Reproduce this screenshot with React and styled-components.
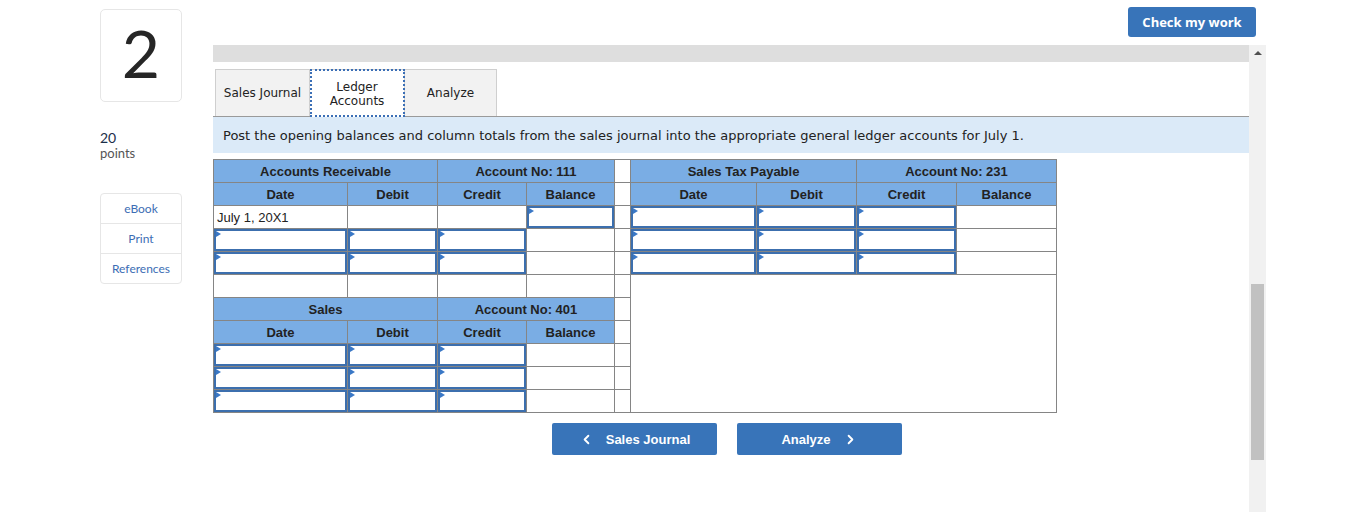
import React from 'react';
import styled, { css, createGlobalStyle } from 'styled-components';
import { ChevronLeft, ChevronRight } from 'lucide-react';

const GlobalStyle = createGlobalStyle`
  body {
    margin: 0;
    background: #fff;
    font-family: "Liberation Sans", Arial, sans-serif;
    overflow: hidden;
  }
`;

const Page = styled.div`
  display: flex;
  padding-left: 100px;
  height: 512px;
`;

const Sidebar = styled.div`
  width: 82px;
  padding-top: 9px;
  display: flex;
  flex-direction: column;
`;

const QuestionBox = styled.div`
  height: 93px;
  box-sizing: border-box;
  padding-bottom: 6px;
  border: 1px solid #e6e6e6;
  border-radius: 5px;
  display: flex;
  align-items: center;
  justify-content: center;
  font-family: Lato, "Open Sans", sans-serif;
  font-weight: 400;
  font-size: 66px;
  color: #262626;
`;

const Points = styled.div`
  margin-top: 28px;
  font-family: Lato, "Open Sans", sans-serif;
  font-size: 14px;
  line-height: 16px;
  color: #1c2f4a;

  span {
    display: block;
    font-size: 13px;
    line-height: 14px;
    color: #555;
  }
`;

const LinkBox = styled.div`
  margin-top: 33px;
  border: 1px solid #e6e6e6;
  border-radius: 4px;
  display: flex;
  flex-direction: column;
`;

const LinkItem = styled.div`
  height: 29px;
  display: flex;
  align-items: center;
  justify-content: center;
  font-family: Lato, "Open Sans", sans-serif;
  font-size: 12px;
  color: #3c6db4;
  border-top: 1px solid #e6e6e6;

  ${p => p.first && css`
    border-top: none;
  `}
`;

const Main = styled.div`
  margin-left: 31px;
  width: 1053px;
  display: flex;
  flex-direction: column;
`;

const TopBar = styled.div`
  height: 45px;
  box-sizing: border-box;
  padding: 7px 10px 0 0;
  display: flex;
  justify-content: flex-end;
  align-items: flex-start;
`;

const CheckButton = styled.button`
  width: 128px;
  height: 30px;
  border: none;
  border-radius: 3px;
  background: #3874b9;
  color: #fff;
  font-family: "Open Sans", Lato, sans-serif;
  font-weight: 700;
  font-size: 13px;
  padding: 0;
`;

const Frame = styled.div`
  display: flex;
  height: 467px;
`;

const Content = styled.div`
  width: 1036px;
  display: flex;
  flex-direction: column;
`;

const GrayBar = styled.div`
  height: 17px;
  background: #dedede;
`;

const TabRow = styled.div`
  margin-top: 7px;
  padding-left: 2px;
  display: flex;
  border-bottom: 1px solid #9a9a9a;
`;

const Tab = styled.div`
  width: ${p => p.w}px;
  height: 47px;
  box-sizing: border-box;
  border: 1px solid #cfcfcf;
  border-bottom: none;
  border-left: none;
  background: #f2f2f2;
  display: flex;
  align-items: center;
  justify-content: center;
  text-align: center;
  font-family: "DejaVu Sans", sans-serif;
  font-size: 12px;
  line-height: 14px;
  color: #222;

  ${p => p.firstTab && css`
    border-left: 1px solid #cfcfcf;
  `}

  ${p => p.active && css`
    position: relative;
    background: #fff;
    height: 48px;
    margin-bottom: -1px;
    outline: 2px dotted #3b6fb6;
    outline-offset: -2px;
  `}
`;

const Prompt = styled.div`
  height: 36px;
  padding-left: 10px;
  background: #dbeaf8;
  display: flex;
  align-items: center;
  font-family: "DejaVu Sans", sans-serif;
  font-size: 13px;
  color: #222;
`;

const Table = styled.table`
  margin-top: 6px;
  border-collapse: collapse;
  table-layout: fixed;
  width: 843px;
  font-family: "Liberation Sans", Arial, sans-serif;
  font-size: 13px;
  color: #222;

  td, th {
    border: 1px solid #858585;
    height: 23px;
    padding: 0;
    box-sizing: border-box;
  }
`;

const Head = styled.th`
  background: #7aade4;
  font-weight: 700;
  text-align: center;
`;

const Cell = styled.td`
  background: #fff;
  padding-left: 3px !important;
`;

const InputCell = styled.td`
  background: #fff;
`;

const Input = styled.div`
  position: relative;
  height: 22px;
  box-sizing: border-box;
  border: 2px solid #3c6fae;

  &::before {
    content: '';
    position: absolute;
    top: 0;
    left: 0;
    border-left: 5px solid #3a78c6;
    border-top: 3px solid transparent;
    border-bottom: 3px solid transparent;
  }
`;

const NavRow = styled.div`
  margin-top: 10px;
  padding-right: 8px;
  display: flex;
  justify-content: center;
  gap: 20px;
`;

const NavButton = styled.button`
  width: 165px;
  height: 32px;
  border: none;
  border-radius: 2px;
  background: #3874b9;
  color: #fff;
  font-family: "Liberation Sans", Arial, sans-serif;
  font-weight: 700;
  font-size: 13px;
  display: flex;
  align-items: center;
  justify-content: center;
  gap: 12px;
  padding: 0;
`;

const ScrollTrack = styled.div`
  width: 17px;
  background: #f1f1f1;
  display: flex;
  flex-direction: column;
  align-items: center;
`;

const ScrollArrow = styled.div`
  margin-top: 6px;
  width: 0;
  height: 0;
  border-left: 4px solid transparent;
  border-right: 4px solid transparent;
  border-bottom: 4px solid #505050;
`;

const ScrollThumb = styled.div`
  margin-top: 229px;
  width: 13px;
  height: 176px;
  background: #c1c1c1;
`;

const inputRow = (
  <>
    <InputCell><Input /></InputCell>
    <InputCell><Input /></InputCell>
    <InputCell><Input /></InputCell>
    <Cell />
  </>
);

const Spacer = () => <Cell />;

export default function App() {
  return (
    <>
      <GlobalStyle />
      <Page>
        <Sidebar>
          <QuestionBox>2</QuestionBox>
          <Points>20<span>points</span></Points>
          <LinkBox>
            <LinkItem first>eBook</LinkItem>
            <LinkItem>Print</LinkItem>
            <LinkItem>References</LinkItem>
          </LinkBox>
        </Sidebar>
        <Main>
          <TopBar>
            <CheckButton>Check my work</CheckButton>
          </TopBar>
          <Frame>
            <Content>
              <GrayBar />
              <TabRow>
                <Tab w={95} firstTab>Sales Journal</Tab>
                <Tab w={95} active>Ledger<br />Accounts</Tab>
                <Tab w={92}>Analyze</Tab>
              </TabRow>
              <Prompt>
                Post the opening balances and column totals from the sales journal into the appropriate general ledger accounts for July 1.
              </Prompt>
              <Table>
                <colgroup>
                  <col style={{ width: 134 }} />
                  <col style={{ width: 90 }} />
                  <col style={{ width: 89 }} />
                  <col style={{ width: 88 }} />
                  <col style={{ width: 16 }} />
                  <col style={{ width: 126 }} />
                  <col style={{ width: 100 }} />
                  <col style={{ width: 100 }} />
                  <col style={{ width: 100 }} />
                </colgroup>
                <tbody>
                  <tr>
                    <Head colSpan={2}>Accounts Receivable</Head>
                    <Head colSpan={2}>Account No: 111</Head>
                    <Spacer />
                    <Head colSpan={2}>Sales Tax Payable</Head>
                    <Head colSpan={2}>Account No: 231</Head>
                  </tr>
                  <tr>
                    <Head>Date</Head>
                    <Head>Debit</Head>
                    <Head>Credit</Head>
                    <Head>Balance</Head>
                    <Spacer />
                    <Head>Date</Head>
                    <Head>Debit</Head>
                    <Head>Credit</Head>
                    <Head>Balance</Head>
                  </tr>
                  <tr>
                    <Cell>July 1, 20X1</Cell>
                    <Cell />
                    <Cell />
                    <InputCell><Input /></InputCell>
                    <Spacer />
                    {inputRow}
                  </tr>
                  <tr>
                    {inputRow}
                    <Spacer />
                    {inputRow}
                  </tr>
                  <tr>
                    {inputRow}
                    <Spacer />
                    {inputRow}
                  </tr>
                  <tr>
                    <Cell />
                    <Cell />
                    <Cell />
                    <Cell />
                    <Spacer />
                    <Cell colSpan={4} rowSpan={6} />
                  </tr>
                  <tr>
                    <Head colSpan={2}>Sales</Head>
                    <Head colSpan={2}>Account No: 401</Head>
                    <Spacer />
                  </tr>
                  <tr>
                    <Head>Date</Head>
                    <Head>Debit</Head>
                    <Head>Credit</Head>
                    <Head>Balance</Head>
                    <Spacer />
                  </tr>
                  <tr>
                    {inputRow}
                    <Spacer />
                  </tr>
                  <tr>
                    {inputRow}
                    <Spacer />
                  </tr>
                  <tr>
                    {inputRow}
                    <Spacer />
                  </tr>
                </tbody>
              </Table>
              <NavRow>
                <NavButton>
                  <ChevronLeft size={15} strokeWidth={3} />
                  Sales Journal
                </NavButton>
                <NavButton>
                  Analyze
                  <ChevronRight size={15} strokeWidth={3} />
                </NavButton>
              </NavRow>
            </Content>
            <ScrollTrack>
              <ScrollArrow />
              <ScrollThumb />
            </ScrollTrack>
          </Frame>
        </Main>
      </Page>
    </>
  );
}
